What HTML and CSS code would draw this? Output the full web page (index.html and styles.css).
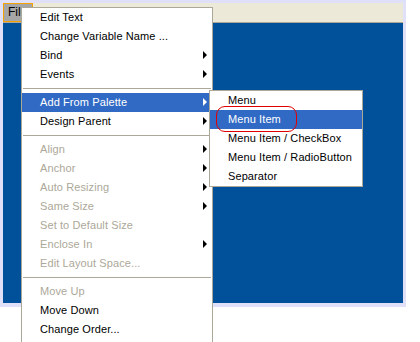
FILE: index.html
```html
<!DOCTYPE html>
<html lang="en">

<head>
  <meta charset="UTF-8" />
  <meta name="viewport" content="width=device-width, initial-scale=1.0" />
  <title>Designer Context Menu</title>
  <link rel="stylesheet" href="styles.css">
</head>

<body>
  <div class="frame">
    <div class="menubar">
      <div class="menubar-item">File</div>
    </div>
    <div class="canvas"></div>
  </div>

  <!-- context menu -->
  <div class="menu main-menu">
    <div class="item"><span class="label">Edit Text</span></div>
    <div class="item"><span class="label">Change Variable Name ...</span></div>
    <div class="item"><span class="label">Bind</span><span class="arrow"></span></div>
    <div class="item"><span class="label">Events</span><span class="arrow"></span></div>
    <div class="sep"></div>
    <div class="item active"><span class="label">Add From Palette</span><span class="arrow"></span></div>
    <div class="item"><span class="label">Design Parent</span><span class="arrow"></span></div>
    <div class="sep"></div>
    <div class="item disabled"><span class="label">Align</span><span class="arrow"></span></div>
    <div class="item disabled"><span class="label">Anchor</span><span class="arrow"></span></div>
    <div class="item disabled"><span class="label">Auto Resizing</span><span class="arrow"></span></div>
    <div class="item disabled"><span class="label">Same Size</span><span class="arrow"></span></div>
    <div class="item disabled"><span class="label">Set to Default Size</span></div>
    <div class="item disabled"><span class="label">Enclose In</span><span class="arrow"></span></div>
    <div class="item disabled"><span class="label">Edit Layout Space...</span></div>
    <div class="sep"></div>
    <div class="item disabled"><span class="label">Move Up</span></div>
    <div class="item"><span class="label">Move Down</span></div>
    <div class="item"><span class="label">Change Order...</span></div>
  </div>

  <!-- submenu: Add From Palette -->
  <div class="menu sub-menu">
    <div class="item"><span class="label">Menu</span></div>
    <div class="item active"><span class="label">Menu Item</span></div>
    <div class="item"><span class="label">Menu Item / CheckBox</span></div>
    <div class="item"><span class="label">Menu Item / RadioButton</span></div>
    <div class="item"><span class="label">Separator</span></div>
  </div>

  <!-- red annotation ring -->
  <div class="callout"></div>
</body>

</html>
```

FILE: styles.css
```css
html,
body {
  margin: 0;
  padding: 0;
  height: 100%;
  overflow: hidden;
  background-color: #fff;
  font-family: 'Liberation Sans', Arial, sans-serif;
  font-size: 11px;
}

.frame {
  display: flex;
  flex-direction: column;
  width: 400px;
  height: 300px;
  padding: 3px 3px 4px 3px;
  background-color: #e0e0f8;
}

.menubar {
  display: flex;
  height: 19px;
  background-color: #ece9d8;
  border-bottom: 1px solid #aca899;
}

.menubar-item {
  box-sizing: border-box;
  width: 30px;
  height: 19px;
  padding-left: 4px;
  line-height: 16px;
  font-size: 12px;
  background-color: #a6a6a6;
  border: 1px solid #f4a300;
}

.canvas {
  flex: 1;
  background-color: #01509a;
}

.menu {
  position: absolute;
  box-sizing: border-box;
  display: flex;
  flex-direction: column;
  background-color: #fff;
  border: 1px solid #aca899;
}

.main-menu {
  left: 21px;
  top: 7px;
  width: 192px;
  padding-bottom: 4px;
}

.sub-menu {
  left: 209px;
  top: 90px;
  width: 154px;
}

.item {
  box-sizing: border-box;
  display: flex;
  align-items: center;
  height: 19px;
  padding-bottom: 1px;
  color: #000;
}

.item .label {
  flex: 1;
  padding-left: 18px;
  letter-spacing: 0.1px;
  white-space: nowrap;
}

.item.active {
  background-color: #316ac5;
  color: #fff;
}

.item.disabled {
  color: #aca899;
}

.arrow {
  width: 0;
  height: 0;
  margin-right: 5px;
  border-top: 4px solid transparent;
  border-bottom: 4px solid transparent;
  border-left: 4px solid #000;
}

.item.active .arrow {
  border-left-color: #fff;
}

.sep {
  height: 9px;
  display: flex;
  flex-direction: column;
  justify-content: center;
}

.sep::before {
  content: "";
  display: block;
  height: 1px;
  margin: 0 1px;
  background-color: #aca899;
}

.callout {
  position: absolute;
  left: 216px;
  top: 106px;
  width: 79px;
  height: 24px;
  border: 1px solid #e00000;
  border-radius: 9px;
}
```
